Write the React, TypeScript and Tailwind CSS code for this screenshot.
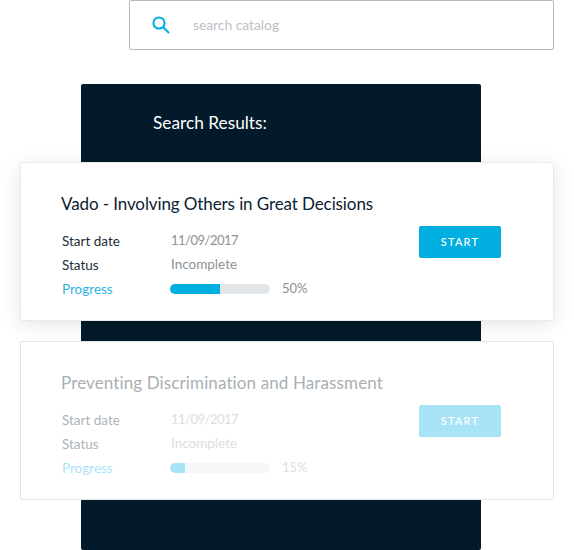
function SearchIcon() {
  return (
    <svg viewBox="0 0 18 18" className="ml-[22px] h-[18px] w-[18px] text-[#00aee0]" fill="none" stroke="currentColor" strokeWidth="2">
      <circle cx="7" cy="7" r="5.6" />
      <path d="M11 11l6 6" />
    </svg>
  );
}

function CourseCard({
  title,
  percent,
  faded,
}: {
  title: string;
  percent: number;
  faded?: boolean;
}) {
  return (
    <div
      className={
        faded
          ? "relative flex h-[159px] w-[534px] rounded-[2px] border border-[#e3e6e9] bg-white"
          : "relative flex h-[159px] w-[534px] rounded-[2px] border border-[#e8eaec] bg-white shadow-[0_4px_20px_rgba(0,0,0,0.1)]"
      }
    >
      <div className="flex-1 pl-[40px] pt-[27px]">
        <h2
          className={
            faded
              ? "text-[17px] leading-[28px] tracking-[0.12px] text-[#a9afb4]"
              : "text-[17px] leading-[28px] tracking-[-0.1px] text-[#0a2233]"
          }
        >
          {title}
        </h2>
        <div className="mt-[11px] grid grid-cols-[109px_1fr] pl-[1px] text-[13.5px] leading-[24px]">
          <span className={faded ? "text-[#aeb3b8]" : "text-[#1a2d3b]"}>Start date</span>
          <span className={faded ? "-mt-[1px] text-[13px] tracking-[-0.5px] text-[#dcdee0]" : "-mt-[1px] text-[13px] tracking-[-0.5px] text-[#8c9296]"}>11/09/2017</span>
          <span className={faded ? "text-[#aeb3b8]" : "text-[#1a2d3b]"}>Status</span>
          <span className={faded ? "-mt-[1px] text-[#dcdee0]" : "-mt-[1px] text-[#8c9296]"}>Incomplete</span>
          <span className={faded ? "text-[#a8e4f6]" : "text-[#2cb5e2]"}>Progress</span>
          <div className="-ml-[1px] flex items-center gap-[12px]">
            <div className={faded ? "h-[10px] w-[100px] overflow-hidden rounded-full bg-[#f5f6f8]" : "h-[10px] w-[100px] overflow-hidden rounded-full bg-[#e3e6e9]"}>
              <div
                className={faded ? "h-full bg-[#a8e4f6]" : "h-full bg-[#00aee0]"}
                style={{ width: `${percent}%` }}
              />
            </div>
            <span className={faded ? "-mt-[2px] text-[13px] text-[#dcdee0]" : "-mt-[2px] text-[13px] text-[#8c9296]"}>{percent}%</span>
          </div>
        </div>
      </div>
      <button
        className={
          faded
            ? "mr-[52px] mt-[63px] h-[32px] w-[82px] rounded-[2px] bg-[#a8e4f6] text-[11px] font-medium tracking-[0.11em] text-white"
            : "mr-[52px] mt-[63px] h-[32px] w-[82px] rounded-[2px] bg-[#00aee0] text-[11px] font-medium tracking-[0.11em] text-white"
        }
      >
        START
      </button>
    </div>
  );
}

export default function App() {
  return (
    <div className="h-[550px] w-[574px] overflow-hidden bg-white font-['Lato',sans-serif]">
      <div className="ml-[129px] flex h-[50px] w-[425px] items-center rounded-[2px] border border-[#b3b9c0] bg-white">
        <SearchIcon />
        <span className="ml-[23px] text-[13.8px] text-[#bcc0c5]">search catalog</span>
      </div>
      <div className="ml-[81px] mt-[34px] h-[466px] w-[400px] rounded-[2px] bg-[#021a29]">
        <div className="pl-[72px] pt-[26px] text-[17.3px] leading-[26px] text-white">Search Results:</div>
        <div className="-ml-[61px] mt-[26px] flex flex-col gap-[20px]">
          <CourseCard title="Vado - Involving Others in Great Decisions" percent={50} />
          <CourseCard title="Preventing Discrimination and Harassment" percent={15} faded />
        </div>
      </div>
    </div>
  );
}
